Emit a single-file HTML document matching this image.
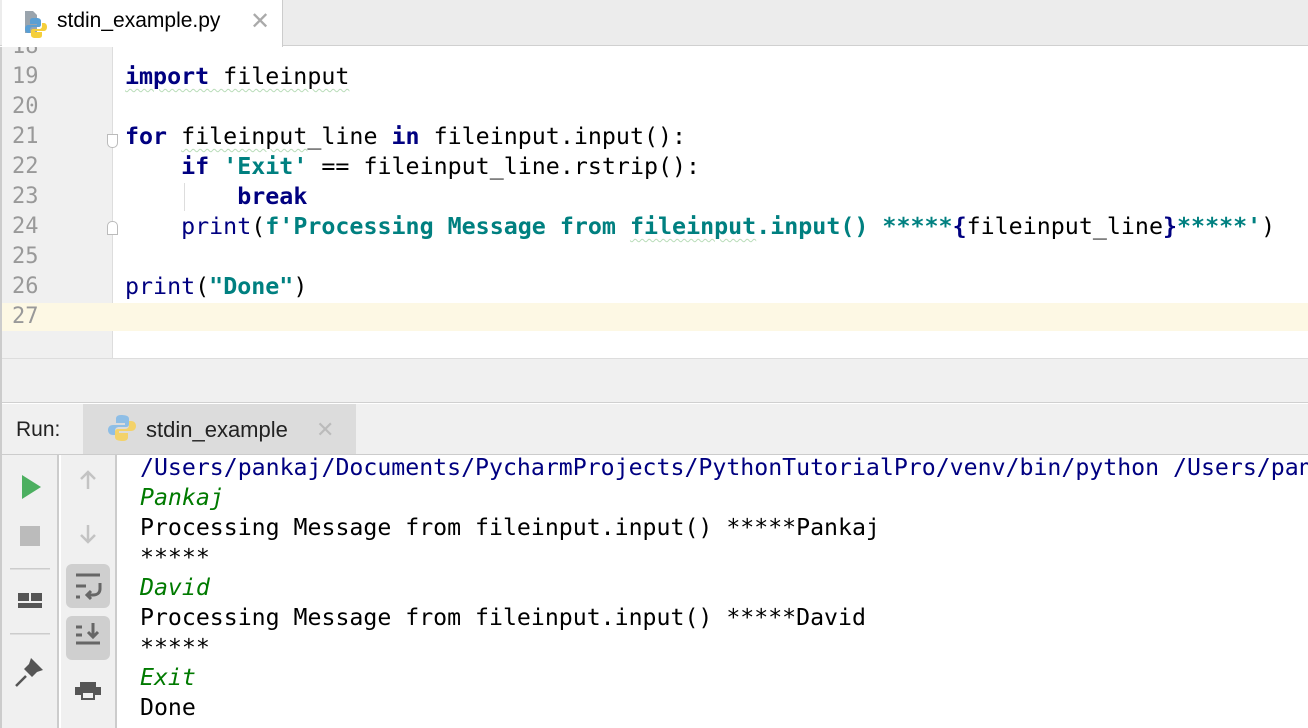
<!DOCTYPE html>
<html><head><meta charset="utf-8"><style>
*{margin:0;padding:0;box-sizing:border-box}
body{width:1308px;height:728px;overflow:hidden;background:#fff;position:relative;font-family:"Liberation Sans",sans-serif}
.abs{position:absolute}
.code{font-family:"DejaVu Sans Mono",monospace;font-size:23.3px;white-space:pre;position:absolute;left:125px;height:30px;line-height:30px;color:#000}
.ln{font-family:"DejaVu Sans Mono",monospace;font-size:22px;color:#999;position:absolute;left:12px;height:30px;line-height:30px}
.k{color:#000080;font-weight:bold}
.s{color:#008080;font-weight:bold}
.b{color:#000080;font-weight:bold}
.con{font-family:"DejaVu Sans Mono",monospace;font-size:23.2px;white-space:pre;position:absolute;left:140px;height:30px;line-height:30px;color:#000}
.g{color:#007a00;font-style:italic}
.wv{text-decoration:underline wavy #b8dcb8;text-underline-offset:4px;text-decoration-thickness:1px}
</style></head><body>
<!-- gutter -->
<div class="abs" style="left:2px;top:47px;width:111px;height:311px;background:#f0f0f0;border-right:1px solid #ddd"></div>
<div class="abs" style="left:0;top:47px;width:2px;height:681px;background:#ccc"></div>
<div class="abs" style="left:2px;top:303px;width:1306px;height:28px;background:#fdf8e4"></div>
<div class="ln" style="top:47px;height:8px;overflow:hidden;line-height:0px">18</div>
<div class="ln" style="top:62px">19</div><div class="ln" style="top:92px">20</div><div class="ln" style="top:122px">21</div><div class="ln" style="top:152px">22</div><div class="ln" style="top:182px">23</div><div class="ln" style="top:212px">24</div><div class="ln" style="top:242px">25</div><div class="ln" style="top:272px">26</div><div class="ln" style="top:302px">27</div>
<!-- tab bar -->
<div class="abs" style="left:0;top:0;width:1308px;height:46px;background:#ececec;border-bottom:1px solid #d0d0d0"></div>
<div class="abs" style="left:2px;top:0;width:281px;height:47px;background:#fff;border-right:1px solid #ccc"></div>
<svg class="abs" style="left:23px;top:9px" width="30" height="30" viewBox="0 0 30 30">
<path d="M2 2h8l4 4v18H2z" fill="#9aa4ad"/>
<path d="M10 9c-3 0-3 2-3 3v3h7v1H5c-2 0-3 2-3 4s1 4 3 4h2v-3c0-2 1-3 3-3h6c1 0 2-1 2-2v-4c0-2-2-3-4-3z" fill="#5a9fd4"/>
<path d="M16 29c3 0 3-2 3-3v-3h-7v-1h9c2 0 3-2 3-4s-1-4-3-4h-2v3c0 2-1 3-3 3h-6c-1 0-2 1-2 2v4c0 2 2 3 4 3z" fill="#f5cf3c"/>
</svg>
<div class="abs" style="left:57px;top:9px;font-size:21px;color:#000">stdin_example.py</div>
<div class="abs" style="left:250px;top:7px;font-size:24px;color:#aaa">✕</div>
<div class="abs" style="left:107px;top:134px;width:11px;height:14px;border:1px solid #bbb;background:#fff;border-radius:0 0 5px 5px"></div>
<div class="abs" style="left:107px;top:221px;width:11px;height:14px;border:1px solid #bbb;background:#fff;border-radius:5px 5px 0 0"></div>
<div class="abs" style="left:184px;top:183px;width:1px;height:28px;background:#ddd"></div>
<div class="code" style="top:62px"><span class="wv"><span class="k">import</span> fileinput</span></div>
<div class="code" style="top:122px"><span class="k">for</span> <span class="wv">fileinput</span>_line <span class="k">in</span> fileinput.input():</div>
<div class="code" style="top:152px">    <span class="k">if</span> <span class="s">'Exit'</span> == fileinput_line.rstrip():</div>
<div class="code" style="top:182px">        <span class="k">break</span></div>
<div class="code" style="top:212px">    <span style="color:#000080">print</span>(<span class="s">f'Processing Message from <span class="wv">fileinput</span>.input() *****</span><span class="b">{</span>fileinput_line<span class="b">}</span><span class="s">*****'</span>)</div>
<div class="code" style="top:272px"><span style="color:#000080">print</span>(<span class="s">"Done"</span>)</div>
<!-- gray strip -->
<div class="abs" style="left:2px;top:358px;width:1306px;height:45px;background:#f0f0f0;border-top:1px solid #ddd;border-bottom:1px solid #d0d0d0"></div>
<!-- run bar -->
<div class="abs" style="left:2px;top:404px;width:1306px;height:51px;background:#f0f0f0;border-bottom:1px solid #ccc"></div>
<div class="abs" style="left:16px;top:418px;font-size:21px;color:#222">Run:</div>
<div class="abs" style="left:83px;top:404px;width:273px;height:50px;background:#dcdcdc"></div>
<svg class="abs" style="left:107px;top:413px" width="30" height="30" viewBox="0 0 30 30">
<path d="M14 2c-5 0-5 3-5 4v4h9v2H6c-3 0-5 2-5 5s2 5 5 5h2v-4c0-3 2-4 4-4h7c2 0 3-1 3-3V6c0-3-3-4-8-4z" fill="#8ebee6"/>
<path d="M16 28c5 0 5-3 5-4v-4h-9v-2h12c3 0 5-2 5-5s-2-5-5-5h-2v4c0 3-2 4-4 4h-7c-2 0-3 1-3 3v5c0 3 3 4 8 4z" fill="#f3d26a"/>
</svg>
<div class="abs" style="left:146px;top:417px;font-size:22px;color:#222">stdin_example</div>
<div class="abs" style="left:316px;top:417px;font-size:22px;color:#bbb">✕</div>
<!-- side toolbars -->
<div class="abs" style="left:2px;top:455px;width:57px;height:273px;background:#f0f0f0;border-right:2px solid #ccc"></div>
<div class="abs" style="left:61px;top:455px;width:56px;height:273px;background:#f0f0f0;border-right:2px solid #ccc"></div>
<svg class="abs" style="left:0;top:455px" width="118" height="273" viewBox="0 0 118 273">
<path d="M22 20l19 12-19 12z" fill="#4caf60"/>
<rect x="20" y="71" width="20" height="20" fill="#bbb"/>
<rect x="10" y="113" width="40" height="1.5" fill="#ccc"/>
<rect x="18" y="138" width="11" height="8" fill="#555"/><rect x="31" y="138" width="11" height="8" fill="#555"/><rect x="18" y="148" width="24" height="5" fill="#555"/>
<rect x="10" y="178" width="40" height="1.5" fill="#ccc"/>
<path d="M16 231l10-10" stroke="#555" stroke-width="2.5"/>
<path d="M31 203l12 12-6 2-5 5-8-8 5-5z" fill="#555"/>
<path d="M88 18v16M81 24l7-7 7 7" stroke="#c3c3c3" stroke-width="2.5" fill="none"/>
<path d="M88 70v16M81 80l7 7 7-7" stroke="#c3c3c3" stroke-width="2.5" fill="none"/>
<rect x="66" y="109" width="44" height="44" rx="6" fill="#cfcfcf"/>
<path d="M76 120h24M76 131h10M76 142h4M100 128v6c0 4-3 6-7 6h-4M91 136l-4 4 4 4" stroke="#666" stroke-width="3" fill="none"/>
<rect x="66" y="161" width="44" height="44" rx="6" fill="#cfcfcf"/>
<path d="M76 172h6M76 180h6M76 188h24M93 168v14M88 177l5 5 5-5" stroke="#666" stroke-width="3" fill="none"/>
<path d="M80 227h16v5h-16z M75 232h26v8h-26z M81 236h14v9h-14z" fill="#555"/><rect x="83" y="238" width="10" height="5" fill="#f0f0f0"/>
</svg>
<!-- console -->
<div class="con" style="top:453px;color:#000080">/Users/pankaj/Documents/PycharmProjects/PythonTutorialPro/venv/bin/python /Users/pankaj</div>
<div class="con g" style="top:483px">Pankaj</div>
<div class="con" style="top:513px">Processing Message from fileinput.input() *****Pankaj</div>
<div class="con" style="top:543px">*****</div>
<div class="con g" style="top:573px">David</div>
<div class="con" style="top:603px">Processing Message from fileinput.input() *****David</div>
<div class="con" style="top:633px">*****</div>
<div class="con g" style="top:663px">Exit</div>
<div class="con" style="top:693px">Done</div>
</body></html>
